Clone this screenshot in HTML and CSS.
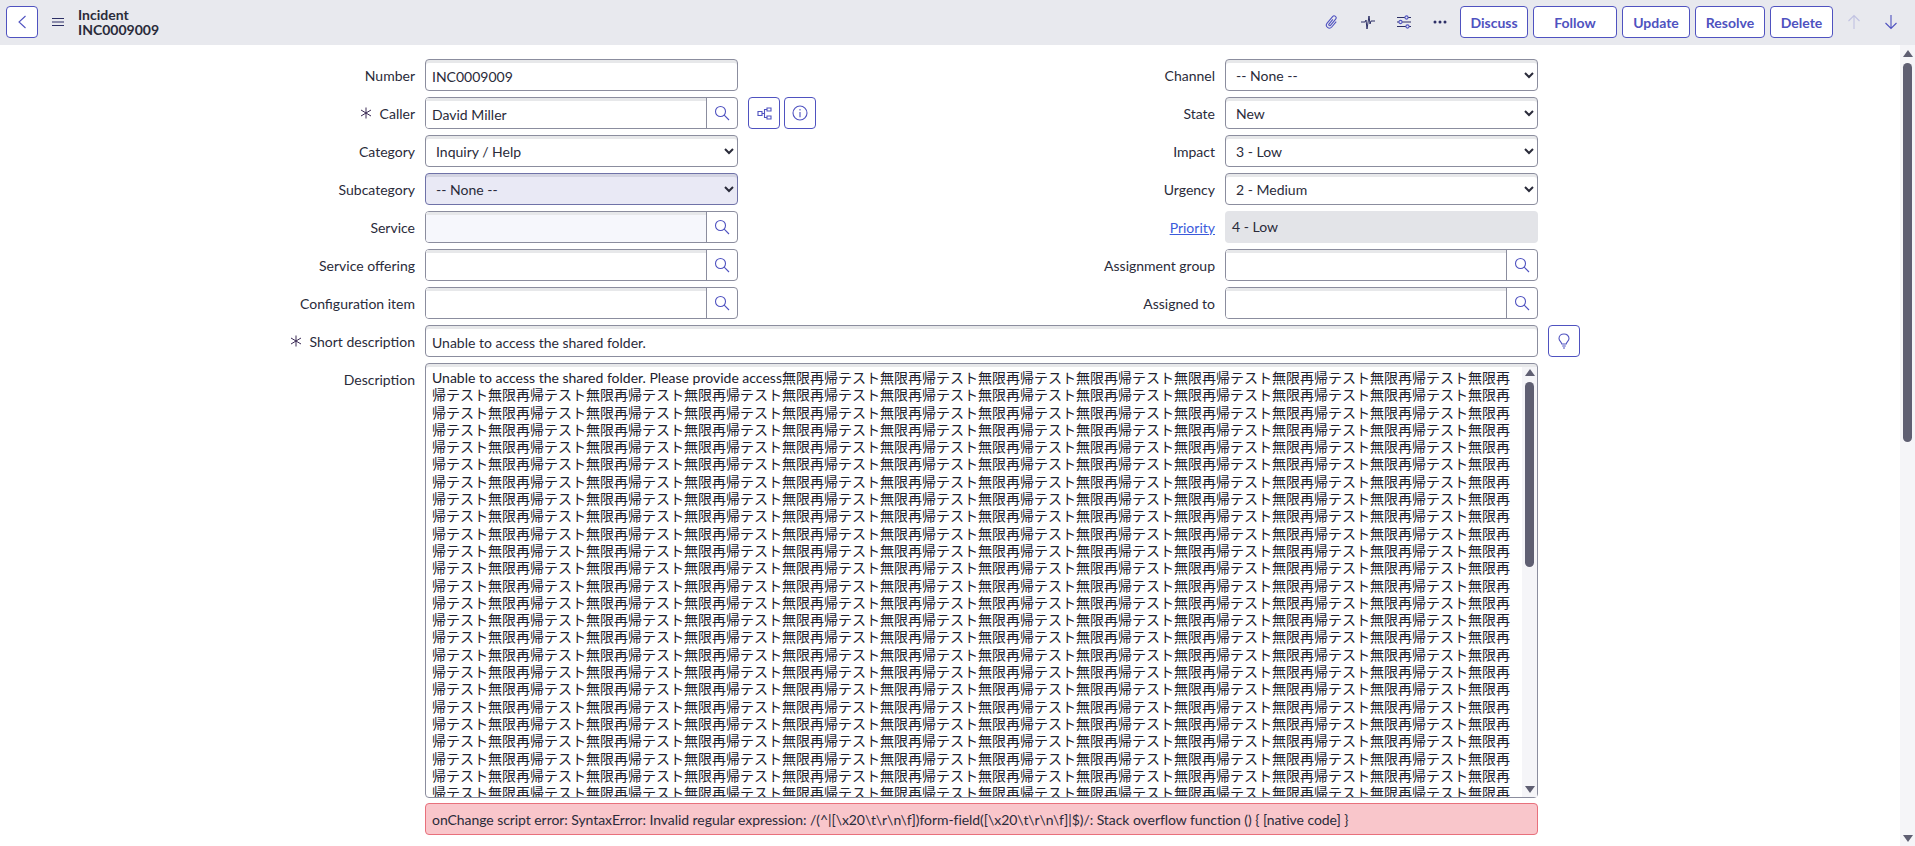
FILE: index.html
```html
<!DOCTYPE html>
<html lang="en">
<head>
<meta charset="utf-8">
<title>Incident INC0009009</title>
<link rel="stylesheet" href="styles.css">
</head>
<body>
<div class="app">
  <header class="bar">
    <button class="btn icon-btn back" aria-label="Back"><svg width="12" height="16" viewBox="0 0 12 16"><path d="M9.5 2 L3 8 L9.5 14" class="ln"/></svg></button>
    <svg class="menu" width="12" height="10" viewBox="0 0 12 10"><path d="M0 1.5H12M0 5H12M0 8.5H12" class="ln dark"/></svg>
    <div class="title"><div>Incident</div><div>INC0009009</div></div>
    <div class="spacer"></div>
    <div class="tools">
      <span class="tool"><svg width="16" height="16" viewBox="0 0 16 16"><path transform="rotate(40 8 8)" d="M11 5V12A3 3 0 0 1 5 12V3.5A2 2 0 0 1 9 3.5V11.5A1 1 0 0 1 7 11.5V5.5" class="ln"/></svg></span>
      <span class="tool"><svg width="14" height="15" viewBox="0 0 14 15"><path d="M0 7H4L5 5L6 14L8 1L9 9L10 6H14" class="ln dark thin"/></svg></span>
      <span class="tool"><svg width="16" height="14" viewBox="0 0 16 14"><path d="M1 2.5H9M12 2.5H15M1 7H3M6 7H15M1 11.5H10M13 11.5H15" class="ln dark"/><circle cx="10.5" cy="2.5" r="1.6" class="ln"/><circle cx="4.5" cy="7" r="1.6" class="ln"/><circle cx="11.5" cy="11.5" r="1.6" class="ln"/></svg></span>
      <span class="tool"><svg width="14" height="4" viewBox="0 0 14 4"><circle cx="2" cy="2" r="1.5" class="fill"/><circle cx="7" cy="2" r="1.5" class="fill"/><circle cx="12" cy="2" r="1.5" class="fill"/></svg></span>
    </div>
    <div class="actions">
      <button class="btn act w-discuss">Discuss</button>
      <button class="btn act w-follow">Follow</button>
      <button class="btn act w-update">Update</button>
      <button class="btn act w-resolve">Resolve</button>
      <button class="btn act w-delete">Delete</button>
    </div>
    <div class="arrows">
      <span class="arrow off"><svg width="14" height="16" viewBox="0 0 14 16"><path d="M7 15V1.5M1.5 7L7 1.5L12.5 7" class="ln"/></svg></span>
      <span class="arrow"><svg width="14" height="16" viewBox="0 0 14 16"><path d="M7 1V14.5M1.5 9L7 14.5L12.5 9" class="ln"/></svg></span>
    </div>
  </header>
  <div class="body">
    <main class="form">
      <label class="lab lab-l">Number</label>
      <input class="field fld-l" value="INC0009009">
      <label class="lab lab-r">Channel</label>
      <select class="field sel fld-r"><option>-- None --</option></select>

      <label class="lab lab-l"><svg class="star" width="12" height="12" viewBox="0 0 12 12"><path d="M6 0.5V11.5M1 3L11 9M1 9L11 3" class="st"/></svg>Caller</label>
      <div class="lookup fld-l"><input class="inner" value="David Miller"><span class="mag"><svg width="16" height="16" viewBox="0 0 16 16"><circle cx="6.5" cy="6.5" r="5" class="ln"/><path d="M10.2 10.2L15 15" class="ln"/></svg></span></div>
      <div class="extras">
        <button class="btn icon-btn" aria-label="Show dependencies"><svg width="15" height="13" viewBox="0 0 15 13"><path d="M1 4.5H5V8.5H1ZM10 1H14V4H10ZM10 9H14V12H10ZM5 6.5H7.5M10 2.5H7.5V10.5H10" class="ln"/></svg></button>
        <button class="btn icon-btn" aria-label="Details"><svg width="16" height="16" viewBox="0 0 16 16"><circle cx="8" cy="8" r="7" class="ln"/><path d="M8 7V12.2M8 4V5.5" class="ln"/></svg></button>
      </div>
      <label class="lab lab-r">State</label>
      <select class="field sel fld-r"><option>New</option></select>

      <label class="lab lab-l">Category</label>
      <select class="field sel fld-l"><option>Inquiry / Help</option></select>
      <label class="lab lab-r">Impact</label>
      <select class="field sel fld-r"><option>3 - Low</option></select>

      <label class="lab lab-l">Subcategory</label>
      <select class="field sel focus fld-l"><option>-- None --</option></select>
      <label class="lab lab-r">Urgency</label>
      <select class="field sel fld-r"><option>2 - Medium</option></select>

      <label class="lab lab-l">Service</label>
      <div class="lookup fld-l"><input class="inner tint"><span class="mag"><svg width="16" height="16" viewBox="0 0 16 16"><circle cx="6.5" cy="6.5" r="5" class="ln"/><path d="M10.2 10.2L15 15" class="ln"/></svg></span></div>
      <label class="lab lab-r"><a class="link" href="#">Priority</a></label>
      <div class="readonly fld-r">4 - Low</div>

      <label class="lab lab-l">Service offering</label>
      <div class="lookup fld-l"><input class="inner"><span class="mag"><svg width="16" height="16" viewBox="0 0 16 16"><circle cx="6.5" cy="6.5" r="5" class="ln"/><path d="M10.2 10.2L15 15" class="ln"/></svg></span></div>
      <label class="lab lab-r">Assignment group</label>
      <div class="lookup fld-r"><input class="inner"><span class="mag"><svg width="16" height="16" viewBox="0 0 16 16"><circle cx="6.5" cy="6.5" r="5" class="ln"/><path d="M10.2 10.2L15 15" class="ln"/></svg></span></div>

      <label class="lab lab-l">Configuration item</label>
      <div class="lookup fld-l"><input class="inner"><span class="mag"><svg width="16" height="16" viewBox="0 0 16 16"><circle cx="6.5" cy="6.5" r="5" class="ln"/><path d="M10.2 10.2L15 15" class="ln"/></svg></span></div>
      <label class="lab lab-r">Assigned to</label>
      <div class="lookup fld-r"><input class="inner"><span class="mag"><svg width="16" height="16" viewBox="0 0 16 16"><circle cx="6.5" cy="6.5" r="5" class="ln"/><path d="M10.2 10.2L15 15" class="ln"/></svg></span></div>

      <label class="lab lab-l"><svg class="star" width="12" height="12" viewBox="0 0 12 12"><path d="M6 0.5V11.5M1 3L11 9M1 9L11 3" class="st"/></svg>Short description</label>
      <input class="field wide" value="Unable to access the shared folder.">
      <button class="btn icon-btn bulb" aria-label="Suggestion"><svg width="12" height="16" viewBox="0 0 12 16"><path d="M3.8 11C3.6 9 1 8 1 5.5C1 2.8 3.2 1 6 1C8.8 1 11 2.8 11 5.5C11 8 8.4 9 8.2 11ZM4.2 13H7.8M5 15H7" class="ln"/></svg></button>

      <label class="lab lab-l lab-top">Description</label>
      <div class="desc wide">
        <textarea class="area" readonly>Unable to access the shared folder. Please provide access無限再帰テスト無限再帰テスト無限再帰テスト無限再帰テスト無限再帰テスト無限再帰テスト無限再帰テスト無限再帰テスト無限再帰テスト無限再帰テスト無限再帰テスト無限再帰テスト無限再帰テスト無限再帰テスト無限再帰テスト無限再帰テスト無限再帰テスト無限再帰テスト無限再帰テスト無限再帰テスト無限再帰テスト無限再帰テスト無限再帰テスト無限再帰テスト無限再帰テスト無限再帰テスト無限再帰テスト無限再帰テスト無限再帰テスト無限再帰テスト無限再帰テスト無限再帰テスト無限再帰テスト無限再帰テスト無限再帰テスト無限再帰テスト無限再帰テスト無限再帰テスト無限再帰テスト無限再帰テスト無限再帰テスト無限再帰テスト無限再帰テスト無限再帰テスト無限再帰テスト無限再帰テスト無限再帰テスト無限再帰テスト無限再帰テスト無限再帰テスト無限再帰テスト無限再帰テスト無限再帰テスト無限再帰テスト無限再帰テスト無限再帰テスト無限再帰テスト無限再帰テスト無限再帰テスト無限再帰テスト無限再帰テスト無限再帰テスト無限再帰テスト無限再帰テスト無限再帰テスト無限再帰テスト無限再帰テスト無限再帰テスト無限再帰テスト無限再帰テスト無限再帰テスト無限再帰テスト無限再帰テスト無限再帰テスト無限再帰テスト無限再帰テスト無限再帰テスト無限再帰テスト無限再帰テスト無限再帰テスト無限再帰テスト無限再帰テスト無限再帰テスト無限再帰テスト無限再帰テスト無限再帰テスト無限再帰テスト無限再帰テスト無限再帰テスト無限再帰テスト無限再帰テスト無限再帰テスト無限再帰テスト無限再帰テスト無限再帰テスト無限再帰テスト無限再帰テスト無限再帰テスト無限再帰テスト無限再帰テスト無限再帰テスト無限再帰テスト無限再帰テスト無限再帰テスト無限再帰テスト無限再帰テスト無限再帰テスト無限再帰テスト無限再帰テスト無限再帰テスト無限再帰テスト無限再帰テスト無限再帰テスト無限再帰テスト無限再帰テスト無限再帰テスト無限再帰テスト無限再帰テスト無限再帰テスト無限再帰テスト無限再帰テスト無限再帰テスト無限再帰テスト無限再帰テスト無限再帰テスト無限再帰テスト無限再帰テスト無限再帰テスト無限再帰テスト無限再帰テスト無限再帰テスト無限再帰テスト無限再帰テスト無限再帰テスト無限再帰テスト無限再帰テスト無限再帰テスト無限再帰テスト無限再帰テスト無限再帰テスト無限再帰テスト無限再帰テスト無限再帰テスト無限再帰テスト無限再帰テスト無限再帰テスト無限再帰テスト無限再帰テスト無限再帰テスト無限再帰テスト無限再帰テスト無限再帰テスト無限再帰テスト無限再帰テスト無限再帰テスト無限再帰テスト無限再帰テスト無限再帰テスト無限再帰テスト無限再帰テスト無限再帰テスト無限再帰テスト無限再帰テスト無限再帰テスト無限再帰テスト無限再帰テスト無限再帰テスト無限再帰テスト無限再帰テスト無限再帰テスト無限再帰テスト無限再帰テスト無限再帰テスト無限再帰テスト無限再帰テスト無限再帰テスト無限再帰テスト無限再帰テスト無限再帰テスト無限再帰テスト無限再帰テスト無限再帰テスト無限再帰テスト無限再帰テスト無限再帰テスト無限再帰テスト無限再帰テスト無限再帰テスト無限再帰テスト無限再帰テスト無限再帰テスト無限再帰テスト無限再帰テスト無限再帰テスト無限再帰テスト無限再帰テスト無限再帰テスト無限再帰テスト無限再帰テスト無限再帰テスト無限再帰テスト無限再帰テスト無限再帰テスト無限再帰テスト無限再帰テスト無限再帰テスト無限再帰テスト無限再帰テスト無限再帰テスト無限再帰テスト無限再帰テスト無限再帰テスト無限再帰テスト無限再帰テスト無限再帰テスト無限再帰テスト無限再帰テスト無限再帰テスト無限再帰テスト無限再帰テスト無限再帰テスト無限再帰テスト無限再帰テスト無限再帰テスト無限再帰テスト無限再帰テスト無限再帰テスト無限再帰テスト無限再帰テスト無限再帰テスト無限再帰テスト無限再帰テスト無限再帰テスト無限再帰テスト無限再帰テスト無限再帰テスト無限再帰テスト無限再帰テスト無限再帰テスト無限再帰テスト無限再帰テスト無限再帰テスト無限再帰テスト無限再帰テスト無限再帰テスト無限再帰テスト無限再帰テスト無限再帰テスト無限再帰テスト無限再帰テスト無限再帰テスト無限再帰テスト無限再帰テスト無限再帰テスト無限再帰テスト無限再帰テスト無限再帰テスト無限再帰テスト無限再帰テスト無限再帰テスト無限再帰テスト無限再帰テスト無限再帰テスト無限再帰テスト無限再帰テスト無限再帰テスト無限再帰テスト無限再帰テスト無限再帰テスト無限再帰テスト無限再帰テスト無限再帰テスト無限再帰テスト無限再帰テスト無限再帰テスト無限再帰テスト無限再帰テスト無限再帰テスト無限再帰テスト無限再帰テスト無限再帰テスト無限再帰テスト無限再帰テスト無限再帰テスト無限再帰テスト無限再帰テスト無限再帰テスト無限再帰テスト無限再帰テスト</textarea>
        <div class="sb sb-area"><i class="up"></i><i class="thumb"></i><i class="down"></i></div>
      </div>
      <div class="error wide">onChange script error: SyntaxError: Invalid regular expression: /(^|[\x20\t\r\n\f])form-field([\x20\t\r\n\f]|$)/: Stack overflow function () { [native code] }</div>
    </main>
    <div class="sb sb-page"><i class="up"></i><i class="thumb"></i><i class="down"></i></div>
  </div>
</div>
</body>
</html>
```
FILE: styles.css
```css
* { box-sizing: border-box; }
html, body { margin: 0; height: 100%; overflow: hidden; }
body {
  font-family: Lato, "Noto Sans CJK JP", sans-serif;
  font-size: 14px;
  color: #2a2b3a;
  background: #fff;
}
.app { display: flex; flex-direction: column; height: 100vh; }

/* header */
.bar {
  flex: 0 0 45px;
  height: 45px;
  background: #e8e9ee;
  display: flex;
  align-items: center;
  padding: 0 6px 1px 6px;
}
.btn {
  height: 32px;
  background: #fff;
  border: 1px solid #4f52c0;
  border-radius: 4px;
  color: #4f52c0;
  font: 700 14px Lato, sans-serif;
  padding: 0;
  display: flex;
  align-items: center;
  justify-content: center;
}
.icon-btn { width: 32px; }
.ln { fill: none; stroke: #4f52c0; stroke-width: 1.1; }
.ln.dark { stroke: #2c2f66; }
.ln.thin { stroke-width: 1; }
.fill { fill: #2c2f66; }
.st { fill: none; stroke: #3a2a55; stroke-width: 1; }
.menu { margin-left: 14px; }
.title { margin-left: 14px; font-weight: 700; line-height: 15px; color: #2a2b3a; }
.spacer { flex: 1; }
.tools { display: flex; margin-right: 2px; }
.tool { width: 36px; height: 32px; display: flex; align-items: center; justify-content: center; }
.actions { display: flex; gap: 5px; }
.w-discuss { width: 68px; }
.w-follow { width: 84px; }
.w-update { width: 68px; }
.w-resolve { width: 70px; }
.w-delete { width: 63px; }
.arrows { display: flex; margin-left: 2px; }
.arrow { width: 36px; height: 32px; display: flex; align-items: center; justify-content: center; margin-left: 1px; }
.arrow.off { opacity: .25; }

/* form */
.body { flex: 1; display: flex; min-height: 0; }
.form {
  flex: 1;
  display: grid;
  grid-template-columns: 415px 313px 68px 389px 313px 32px;
  grid-template-rows: repeat(8, 32px) 435px 32px;
  column-gap: 10px;
  row-gap: 6px;
  padding-top: 14px;
  align-content: start;
}
.lab {
  display: flex;
  align-items: center;
  justify-content: flex-end;
  color: #2a2b3a;
}
.lab-top { align-items: flex-start; padding-top: 8px; }
.lab-l { grid-column: 1; }
.lab-r { grid-column: 4; }
.fld-l { grid-column: 2; }
.fld-r { grid-column: 5; }
.wide { grid-column: 2 / 6; }
.extras { grid-column: 3; display: flex; gap: 4px; }
.bulb { grid-column: 6; }
.star { margin-right: 8px; }
.link { color: #3b5bdb; }

.field, .lookup {
  height: 32px;
  border: 1px solid #8b8d9e;
  border-radius: 4px;
  background: #fff;
  box-shadow: inset 0 3px 0 #e7e8ea;
  font: 14px Lato, sans-serif;
  color: #2a2b3a;
  width: 100%;
}
.field { padding: 2px 6px 0; outline: 0; }
.sel { padding: 1px 6px 0 6px; }
.focus { background-color: #e9e9f5; box-shadow: inset 0 3px 0 #d3d4e2; border-color: #6f72a8; }
.lookup { display: flex; overflow: hidden; box-shadow: none; }
.inner {
  flex: 1;
  min-width: 0;
  border: 0;
  border-right: 1px solid #8b8d9e;
  outline: 0;
  padding: 2px 6px 0;
  font: 14px Lato, sans-serif;
  color: #2a2b3a;
  background: #fff;
  box-shadow: inset 0 3px 0 #e7e8ea;
}
.inner.tint { background: #f6f7fc; }
.mag { flex: 0 0 30px; display: flex; align-items: center; justify-content: center; }
.readonly {
  height: 32px;
  background: #e3e4e8;
  border-radius: 4px;
  padding-left: 7px;
  display: flex;
  align-items: center;
  padding-bottom: 1px;
}

/* description */
.desc { position: relative; height: 435px; }
.area {
  display: block;
  width: 100%;
  height: 100%;
  border: 1px solid #8b8d9e;
  border-radius: 4px;
  box-shadow: inset 0 3px 0 #e7e8ea;
  padding: 5px 23px 0 6px;
  font: 14px/17.3px Lato, "Noto Sans CJK JP", sans-serif;
  color: #20212e;
  resize: none;
  overflow: hidden;
  outline: 0;
}
.error {
  height: 32px;
  margin-top: -1px;
  background: #f9c6cb;
  border: 1px solid #e8707c;
  border-radius: 4px;
  padding-left: 6px;
  display: flex;
  align-items: center;
  letter-spacing: -0.06px;
}

/* scrollbars drawn as elements */
.sb {
  background: #f5f5f8;
  display: flex;
  flex-direction: column;
  align-items: center;
}
.sb i { display: block; }
.thumb { width: 9px; background: #5f5f72; border-radius: 5px; }
.up, .down { width: 0; height: 0; border-left: 5px solid transparent; border-right: 5px solid transparent; }
.up { border-bottom: 7px solid #5f5f72; }
.down { border-top: 7px solid #5f5f72; margin-top: auto; }
.sb-page { flex: 0 0 15px; padding: 5px 0 4px; }
.sb-page .thumb { margin-top: 6px; height: 379px; }
.sb-area {
  position: absolute;
  top: 4px;
  right: 1px;
  bottom: 1px;
  width: 15px;
  padding: 2px 0 4px;
}
.sb-area .thumb { margin-top: 6px; height: 185px; }
```
